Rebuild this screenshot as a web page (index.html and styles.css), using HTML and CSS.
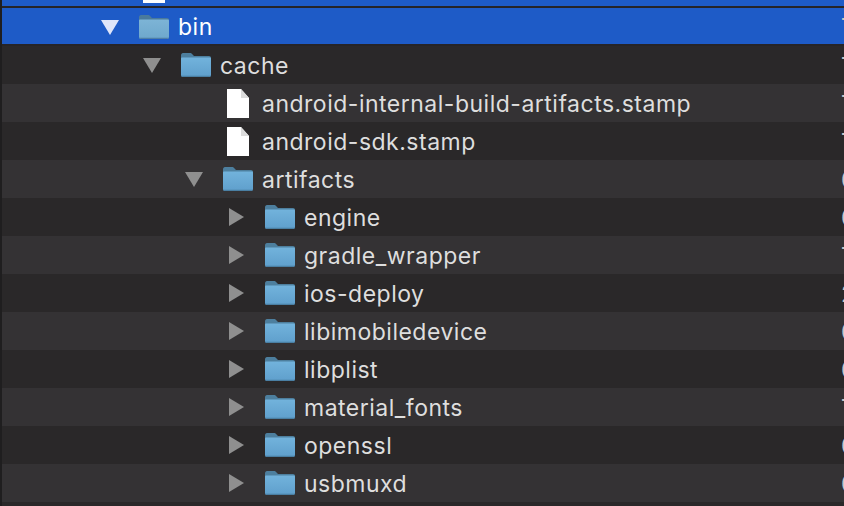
FILE: index.html
```html
<!DOCTYPE html>
<html lang="en">
<head>
<meta charset="utf-8">
<title>Finder list</title>
<link rel="stylesheet" href="styles.css">
</head>
<body>
<svg class="defs" width="0" height="0" aria-hidden="true">
  <defs>
    <linearGradient id="fbody" x1="0" y1="0" x2="0" y2="1">
      <stop offset="0" stop-color="#72b3dc"/>
      <stop offset="1" stop-color="#5f9fcc"/>
    </linearGradient>
    <linearGradient id="fbodysel" x1="0" y1="0" x2="0" y2="1">
      <stop offset="0" stop-color="#7db4d6"/>
      <stop offset="1" stop-color="#6ea8cc"/>
    </linearGradient>
    <symbol id="folder" viewBox="0 0 30 24">
      <path d="M0 2.500C0 1 .8 0 2 0h7c1 0 1.600.5 2.300 1.300L13 3h15c1.200 0 2 .8 2 2v6H0z" fill="#4d7f9e"/>
      <path d="M0 5.500C0 4.800.5 4.400 1.200 4.400h27.600c.7 0 1.200.4 1.200 1.100V22c0 1.200-.8 2-2 2H2c-1.200 0-2-.8-2-2z" fill="url(#fbody)"/>
      <path d="M0 22.800h30V22c0 1.200-.8 2-2 2H2c-1.200 0-2-.8-2-2z" fill="#4a7fa3"/>
    </symbol>
    <symbol id="folder-sel" viewBox="0 0 30 24">
      <path d="M0 2.500C0 1 .8 0 2 0h7c1 0 1.600.5 2.300 1.300L13 3h15c1.200 0 2 .8 2 2v6H0z" fill="#4a7a9c"/>
      <path d="M0 5.500C0 4.800.5 4.400 1.200 4.400h27.600c.7 0 1.200.4 1.200 1.100V22c0 1.200-.8 2-2 2H2c-1.200 0-2-.8-2-2z" fill="url(#fbodysel)"/>
      <path d="M0 22.800h30V22c0 1.200-.8 2-2 2H2c-1.200 0-2-.8-2-2z" fill="#4f7fa6"/>
    </symbol>
    <symbol id="file" viewBox="0 0 22 29">
      <path d="M0 0h14l8 9v20H0z" fill="#fff"/>
      <path d="M14 0l8 9h-8z" fill="#dcdcdc"/>
    </symbol>
    <symbol id="down" viewBox="0 0 18 15"><path d="M0 0h18L9 15z"/></symbol>
    <symbol id="right" viewBox="0 0 15 18"><path d="M0 0l15 9L0 18z"/></symbol>
  </defs>
</svg>
<main class="list">
  <div class="row selected stub"><span class="stub-file"></span></div>
  <div class="row selected l0">
    <svg class="tw-down"><use href="#down"/></svg>
    <svg class="folder"><use href="#folder-sel"/></svg>
    <span class="label">bin</span><span class="date">Today</span>
  </div>
  <div class="row l1">
    <svg class="tw-down"><use href="#down"/></svg>
    <svg class="folder"><use href="#folder"/></svg>
    <span class="label">cache</span><span class="date">Today</span>
  </div>
  <div class="row alt l2 leaf">
    <svg class="file"><use href="#file"/></svg>
    <span class="label">android-internal-build-artifacts.stamp</span><span class="date">Today</span>
  </div>
  <div class="row l2 leaf">
    <svg class="file"><use href="#file"/></svg>
    <span class="label">android-sdk.stamp</span><span class="date">Today</span>
  </div>
  <div class="row alt l2">
    <svg class="tw-down"><use href="#down"/></svg>
    <svg class="folder"><use href="#folder"/></svg>
    <span class="label">artifacts</span><span class="date">0</span>
  </div>
  <div class="row l3">
    <svg class="tw-right"><use href="#right"/></svg>
    <svg class="folder"><use href="#folder"/></svg>
    <span class="label">engine</span><span class="date">0</span>
  </div>
  <div class="row alt l3">
    <svg class="tw-right"><use href="#right"/></svg>
    <svg class="folder"><use href="#folder"/></svg>
    <span class="label">gradle_wrapper</span><span class="date">Today</span>
  </div>
  <div class="row l3">
    <svg class="tw-right"><use href="#right"/></svg>
    <svg class="folder"><use href="#folder"/></svg>
    <span class="label">ios-deploy</span><span class="date">2</span>
  </div>
  <div class="row alt l3">
    <svg class="tw-right"><use href="#right"/></svg>
    <svg class="folder"><use href="#folder"/></svg>
    <span class="label">libimobiledevice</span><span class="date">0</span>
  </div>
  <div class="row l3">
    <svg class="tw-right"><use href="#right"/></svg>
    <svg class="folder"><use href="#folder"/></svg>
    <span class="label">libplist</span><span class="date">0</span>
  </div>
  <div class="row alt l3">
    <svg class="tw-right"><use href="#right"/></svg>
    <svg class="folder"><use href="#folder"/></svg>
    <span class="label">material_fonts</span><span class="date">Today</span>
  </div>
  <div class="row l3">
    <svg class="tw-right"><use href="#right"/></svg>
    <svg class="folder"><use href="#folder"/></svg>
    <span class="label">openssl</span><span class="date">0</span>
  </div>
  <div class="row alt l3">
    <svg class="tw-right"><use href="#right"/></svg>
    <svg class="folder"><use href="#folder"/></svg>
    <span class="label">usbmuxd</span><span class="date">0</span>
  </div>
  <div class="row end"></div>
</main>
</body>
</html>
```

FILE: styles.css
```css
html, body {
  margin: 0;
  padding: 0;
  height: 100%;
  overflow: hidden;
  background: #1f1e1f;
}
.defs { display: block; height: 0; }
.list {
  margin-left: 2px;
  display: flex;
  flex-direction: column;
  height: 506px;
  overflow: hidden;
  font-family: Inter, "Liberation Sans", sans-serif;
  font-size: 23px;
  letter-spacing: 0.5px;
  color: #dedede;
}
.row {
  flex: none;
  height: 38px;
  display: flex;
  align-items: center;
  background: #2a2829;
  fill: #8f8f8f;
  box-sizing: border-box;
}
.row.alt { background: #343234; }
.row.selected {
  background: #1e5bc7;
  border-bottom: 2px solid #262427;
  color: #fff;
  fill: #dfe6fa;
}
.row.selected .folder, .row.selected .tw-down { margin-top: 2px; }
.row.stub { height: 8px; align-items: flex-start; padding-left: 141px; }
.row.end { height: 4px; }
.stub-file { width: 22px; height: 3px; background: #fff; }
.l0 { padding-left: 99px; }
.l1 { padding-left: 141px; }
.l2 { padding-left: 183px; }
.l3 { padding-left: 225px; }
.l2.leaf { padding-left: 225px; }
.tw-down { width: 18px; height: 15px; margin-right: 20px; }
.tw-right { width: 15px; height: 18px; margin-left: 2px; margin-right: 21px; }
.folder { width: 30px; height: 24px; margin-right: 9px; }
.file { width: 22px; height: 29px; margin-right: 13px; }
.label { flex: 1; white-space: nowrap; margin-top: 2px; }
.date { width: 3px; overflow: hidden; white-space: nowrap; color: #c8c8c8; margin-top: 2px; }
```
